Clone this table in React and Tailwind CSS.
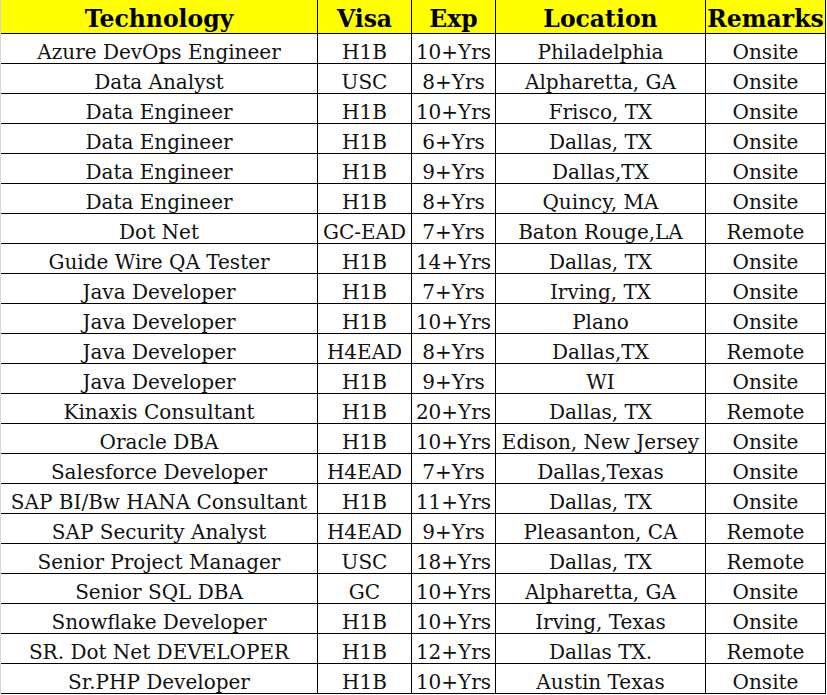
import React from "react";

const rows = [
  ["Azure DevOps Engineer", "H1B", "10+Yrs", "Philadelphia", "Onsite"],
  ["Data Analyst", "USC", "8+Yrs", "Alpharetta, GA", "Onsite"],
  ["Data Engineer", "H1B", "10+Yrs", "Frisco, TX", "Onsite"],
  ["Data Engineer", "H1B", "6+Yrs", "Dallas, TX", "Onsite"],
  ["Data Engineer", "H1B", "9+Yrs", "Dallas,TX", "Onsite"],
  ["Data Engineer", "H1B", "8+Yrs", "Quincy, MA", "Onsite"],
  ["Dot Net", "GC-EAD", "7+Yrs", "Baton Rouge,LA", "Remote"],
  ["Guide Wire QA Tester", "H1B", "14+Yrs", "Dallas, TX", "Onsite"],
  ["Java Developer", "H1B", "7+Yrs", "Irving, TX", "Onsite"],
  ["Java Developer", "H1B", "10+Yrs", "Plano", "Onsite"],
  ["Java Developer", "H4EAD", "8+Yrs", "Dallas,TX", "Remote"],
  ["Java Developer", "H1B", "9+Yrs", "WI", "Onsite"],
  ["Kinaxis Consultant", "H1B", "20+Yrs", "Dallas, TX", "Remote"],
  ["Oracle DBA", "H1B", "10+Yrs", "Edison, New Jersey", "Onsite"],
  ["Salesforce Developer", "H4EAD", "7+Yrs", "Dallas,Texas", "Onsite"],
  ["SAP BI/Bw HANA Consultant", "H1B", "11+Yrs", "Dallas, TX", "Onsite"],
  ["SAP Security Analyst", "H4EAD", "9+Yrs", "Pleasanton, CA", "Remote"],
  ["Senior Project Manager", "USC", "18+Yrs", "Dallas, TX", "Remote"],
  ["Senior SQL DBA", "GC", "10+Yrs", "Alpharetta, GA", "Onsite"],
  ["Snowflake Developer", "H1B", "10+Yrs", "Irving, Texas", "Onsite"],
  ["SR. Dot Net DEVELOPER", "H1B", "12+Yrs", "Dallas TX.", "Remote"],
  ["Sr.PHP Developer", "H1B", "10+Yrs", "Austin Texas", "Onsite"],
];

const headers = ["Technology", "Visa", "Exp", "Location", "Remarks"];

const App = () => {
  return (
    <div
      className="w-[827px] h-[695px] bg-white overflow-hidden"
      style={{ fontFamily: '"DejaVu Serif", "Liberation Serif", serif' }}
    >
      <div className="grid grid-cols-[317px_94px_84px_210px_120px] w-[825px] border-l border-gray-300">
        {/* HEADER */}
        {headers.map((h) => (
          <div
            key={h}
            className="h-[34px] bg-[#ffff00] border-r-[1.5px] border-b-[1.5px] border-black flex items-end justify-center text-[23.5px] font-bold leading-none text-black"
          >
            <span className="pb-[2px]">{h}</span>
          </div>
        ))}

        {/* ROWS */}
        {rows.map((row, i) =>
          row.map((cell, j) => (
            <div
              key={i + "-" + j}
              className="h-[30px] border-r-[1.5px] border-b-[1.5px] border-black flex items-end justify-center text-[20px] leading-none text-[#111]"
            >
              <span className="pb-[1px] whitespace-nowrap">{cell}</span>
            </div>
          ))
        )}
      </div>
    </div>
  );
};

export default App;
